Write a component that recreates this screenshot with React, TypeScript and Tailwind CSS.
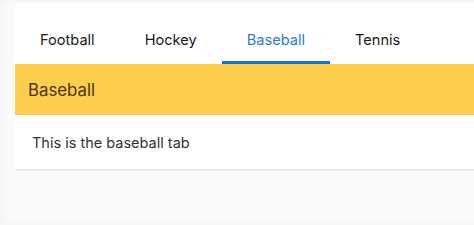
import { useState } from 'react';

const TABS = ['Football', 'Hockey', 'Baseball', 'Tennis'];

export default function App() {
  const [active, setActive] = useState('Baseball');

  return (
    <div className="h-[225px] w-[474px] bg-[#f6f6f6] pt-[3px] pl-[3px] font-['Inter','Noto_Sans',sans-serif]">
      <div className="h-[219px] bg-[#fafafa] pl-[12px]">
        <div className="flex bg-white">
          {TABS.map(tab => (
            <button
              key={tab}
              onClick={() => setActive(tab)}
              className={
                'px-[25px] pt-[27px] pb-[11px] text-[14.6px] leading-[20px] border-b-[3px] ' +
                (tab === active ? 'text-[#2f7ad1] border-[#1f6fc9]' : 'text-[#1a1a1a] border-transparent')
              }
            >
              {tab}
            </button>
          ))}
          <div className="flex-1" />
        </div>
        <div className="h-[51px] bg-[#fccd4f] pl-[13px] flex items-center">
          <h2 className="text-[16.8px] text-[#4a3508] pt-[2px]">{active}</h2>
        </div>
        <div className="h-[56px] bg-white pl-[17px] flex items-center border-b-2 border-[#e9e9e9]">
          <p className="text-[14.5px] text-[#333333] pt-[2px]">This is the {active.toLowerCase()} tab</p>
        </div>
      </div>
    </div>
  );
}
